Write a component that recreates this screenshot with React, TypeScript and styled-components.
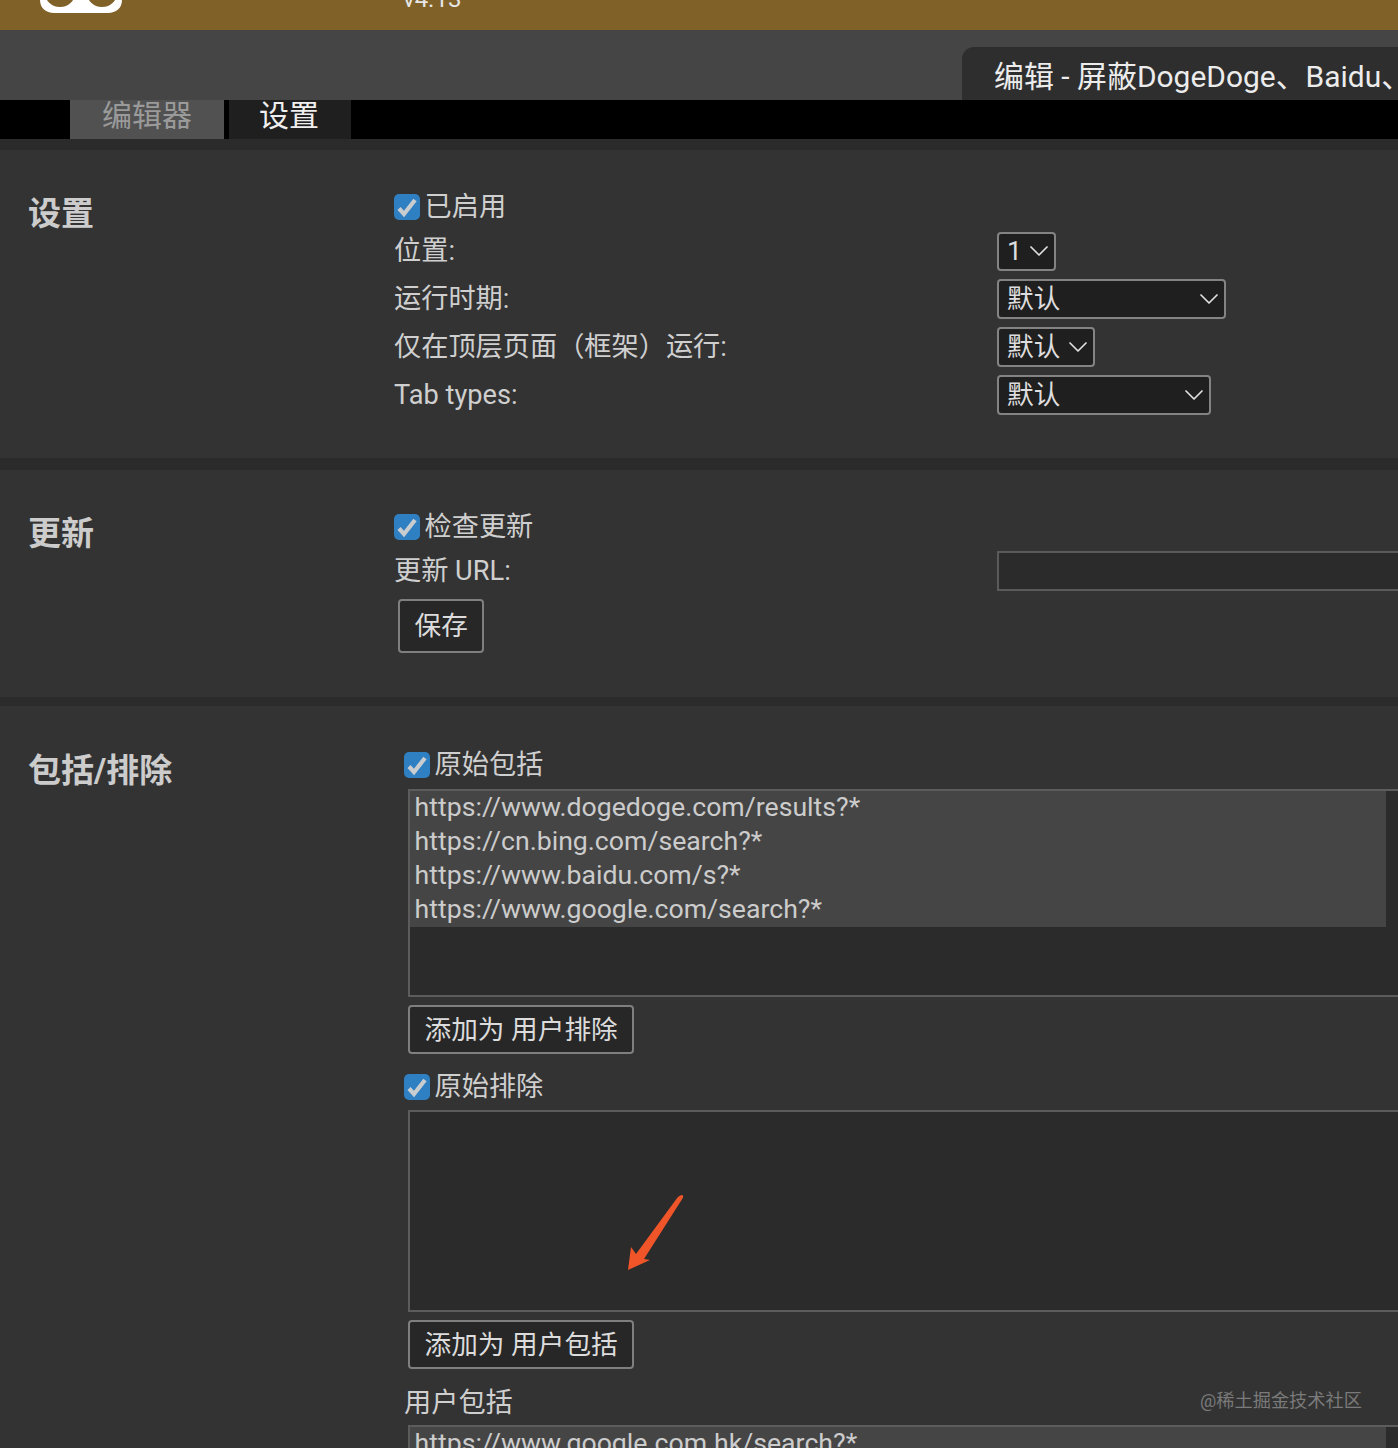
import React from "react";
import styled, { createGlobalStyle } from "styled-components";
import { ChevronDown } from "lucide-react";

const Global = createGlobalStyle`
  html, body { margin: 0; padding: 0; background: #333; }
  * { box-sizing: border-box; }
`;

const Page = styled.div`
  position: relative;
  width: 1398px;
  height: 1448px;
  overflow: hidden;
  background: #2b2b2b;
  font-family: Roboto, "Noto Sans CJK SC", sans-serif;
  font-size: 27.2px;
  line-height: 34px;
  color: #cfcfcf;
`;

const Header = styled.header`
  height: 30px;
  background: #806128;
  display: flex;
  align-items: flex-end;
  overflow: hidden;
  padding: 0 0 17px 40px;
`;

const Version = styled.span`
  margin-left: 279px;
  margin-bottom: 2px;
  font-size: 24px;
  line-height: 24px;
  color: #e6e6e6;
`;

const TitleBar = styled.div`
  height: 70px;
  background: #454546;
  padding: 17px 0 0 962px;
  overflow: hidden;
`;

const TitleTab = styled.div`
  height: 53px;
  width: 480px;
  padding-left: 32px;
  border-top-left-radius: 12px;
  background: #2e2e2e;
  color: #ececec;
  font-size: 29.95px;
  line-height: 60px;
  white-space: nowrap;
`;

const TabStrip = styled.nav`
  height: 39px;
  background: #000;
  padding-left: 70px;
  display: flex;
  gap: 5px;
`;

const Tab = styled.div<{ $active?: boolean }>`
  width: ${(p) => (p.$active ? 122 : 154)}px;
  padding-right: ${(p) => (p.$active ? 2 : 0)}px;
  background: ${(p) => (p.$active ? "#1f1f1f" : "#515151")};
  color: ${(p) => (p.$active ? "#efefef" : "#9a9a9a")};
  font-size: 30px;
  line-height: 32px;
  text-align: center;
`;

const Section = styled.section<{ $top: number; $height?: number }>`
  display: flex;
  margin-top: ${(p) => p.$top}px;
  height: ${(p) => (p.$height ? `${p.$height}px` : "auto")};
  background: #333;
`;

const SectionTitle = styled.h2<{ $top?: number }>`
  width: 394px;
  flex: none;
  margin: ${(p) => p.$top ?? 43}px 0 0;
  padding-left: 28px;
  font-size: 33px;
  line-height: 42px;
  font-weight: 700;
  color: #cccccc;
`;

const Body = styled.div<{ $top: number; $left?: number }>`
  flex: 1;
  min-width: 0;
  padding: ${(p) => p.$top}px 0 0 ${(p) => p.$left ?? 0}px;
`;

const Row = styled.div<{ $h: number; $mt?: number; $mb?: number }>`
  display: grid;
  grid-template-columns: 603px 1fr;
  align-items: center;
  height: ${(p) => p.$h}px;
  margin-top: ${(p) => p.$mt ?? 0}px;
  margin-bottom: ${(p) => p.$mb ?? 0}px;
`;

const CheckLine = styled.label<{ $mt?: number }>`
  display: flex;
  align-items: center;
  gap: 4.5px;
  height: 44px;
  margin-top: ${(p) => p.$mt ?? 0}px;
`;

const Box = styled.span`
  width: 26px;
  height: 26px;
  border-radius: 5px;
  background: #2f7fc3;
  display: block;
`;

const Select = styled.div<{ $w: number; $h?: number }>`
  width: ${(p) => p.$w}px;
  height: ${(p) => p.$h ?? 40}px;
  border: 2px solid #838383;
  border-radius: 4px;
  background: #1f1f1f;
  color: #dddddd;
  font-size: 26.67px;
  padding: 0 0 0 8px;
  display: flex;
  align-items: center;
  justify-content: space-between;
  white-space: nowrap;

  svg {
    flex: none;
    margin-right: -1px;
  }
`;

const UrlInput = styled.div`
  width: 420px;
  height: 40px;
  border: 2px solid #5a5a5a;
  background: #2b2b2b;
`;

const Button = styled.button<{ $h: number; $mt?: number; $ml?: number }>`
  display: block;
  height: ${(p) => p.$h}px;
  margin: ${(p) => p.$mt ?? 0}px 0 0 ${(p) => p.$ml ?? 0}px;
  padding: 0 14.5px 0 14.5px;
  border: 2px solid #7f7f7f;
  border-radius: 4px;
  background: #272727;
  color: #dcdcdc;
  font: inherit;
  font-size: 26.67px;
  white-space: nowrap;
`;

const TextBox = styled.div<{ $h: number; $mt?: number }>`
  width: 1000px;
  height: ${(p) => p.$h}px;
  margin: ${(p) => p.$mt ?? 0}px 0 0 4px;
  border: 2px solid #5c5c5c;
  background: #2b2b2b;
  overflow: hidden;
`;

const Lines = styled.div`
  width: 976px;
  margin-top: -1px;
  padding: 0 0 1px 4.6px;
  background: #454545;
  font-size: 26.67px;
  line-height: 34px;
  color: #cccccc;
  white-space: pre;
`;

const Watermark = styled.div`
  position: absolute;
  left: 1200px;
  top: 1389px;
  font-size: 18.2px;
  line-height: 24px;
  color: #7a7a7a;
`;

const ArrowMark = styled.svg`
  position: absolute;
  left: 620px;
  top: 1190px;
`;

const Logo = () => (
  <svg width="84" height="13" viewBox="0 0 84 13" style={{ display: "block" }}>
    <path d="M0 -20H82V0C82 8 76 13 68 13H14C6 13 0 8 0 0Z" fill="#fff" />
    <circle cx="20" cy="-8.6" r="15.6" fill="#806128" />
    <circle cx="62" cy="-8.6" r="15.6" fill="#806128" />
  </svg>
);

const Check = () => (
  <Box>
    <svg width="26" height="26" viewBox="0 0 26 26" style={{ display: "block" }}>
      <path d="M5 14.5L10 20L21 6" fill="none" stroke="#c9cdd0" strokeWidth="4.2" />
    </svg>
  </Box>
);

const Chevron = () => <ChevronDown size={32} strokeWidth={1.3} color="#e0e0e0" />;

const includes = `https://www.dogedoge.com/results?*
https://cn.bing.com/search?*
https://www.baidu.com/s?*
https://www.google.com/search?*`;

export default function App() {
  return (
    <Page>
      <Global />
      <Header>
        <Logo />
        <Version>v4.13</Version>
      </Header>
      <TitleBar>
        <TitleTab>编辑 - 屏蔽DogeDoge、Baidu、</TitleTab>
      </TitleBar>
      <TabStrip>
        <Tab>编辑器</Tab>
        <Tab $active>设置</Tab>
      </TabStrip>

      <Section $top={11} $height={308}>
        <SectionTitle>设置</SectionTitle>
        <Body $top={35}>
          <CheckLine>
            <Check />
            已启用
          </CheckLine>
          <Row $h={44} $mb={2}>
            <span>位置:</span>
            <Select $w={59} $h={39}>
              1<Chevron />
            </Select>
          </Row>
          <Row $h={48}>
            <span>运行时期:</span>
            <Select $w={229}>
              默认<Chevron />
            </Select>
          </Row>
          <Row $h={48}>
            <span>仅在顶层页面（框架）运行:</span>
            <Select $w={98}>
              默认<Chevron />
            </Select>
          </Row>
          <Row $h={48}>
            <span>Tab types:</span>
            <Select $w={214}>
              默认<Chevron />
            </Select>
          </Row>
        </Body>
      </Section>

      <Section $top={12} $height={227}>
        <SectionTitle>更新</SectionTitle>
        <Body $top={35}>
          <CheckLine>
            <Check />
            检查更新
          </CheckLine>
          <Row $h={44} $mb={6}>
            <span>更新 URL:</span>
            <UrlInput />
          </Row>
          <Button $h={54} $ml={4}>保存</Button>
        </Body>
      </Section>

      <Section $top={9}>
        <SectionTitle $top={44}>包括/排除</SectionTitle>
        <Body $top={37} $left={10}>
          <CheckLine>
            <Check />
            原始包括
          </CheckLine>
          <TextBox $h={208} $mt={2}>
            <Lines>{includes}</Lines>
          </TextBox>
          <Button $h={49} $mt={8} $ml={4}>添加为 用户排除</Button>
          <CheckLine $mt={11}>
            <Check />
            原始排除
          </CheckLine>
          <TextBox $h={202} $mt={1} />
          <Button $h={49} $mt={8} $ml={4}>添加为 用户包括</Button>
          <Row $h={44} $mt={12}>
            <span>用户包括</span>
          </Row>
          <TextBox $h={120}>
            <Lines>https://www.google.com.hk/search?*</Lines>
          </TextBox>
        </Body>
      </Section>

      <ArrowMark width="70" height="85" viewBox="0 0 70 85">
        <path
          d="M8 80L11 57L16 64L57.5 7.5Q60 4.5 62.5 5Q64 6.5 62.5 8.5L24 69L30 70Z"
          fill="#f0552a"
        />
      </ArrowMark>
      <Watermark>@稀土掘金技术社区</Watermark>
    </Page>
  );
}
